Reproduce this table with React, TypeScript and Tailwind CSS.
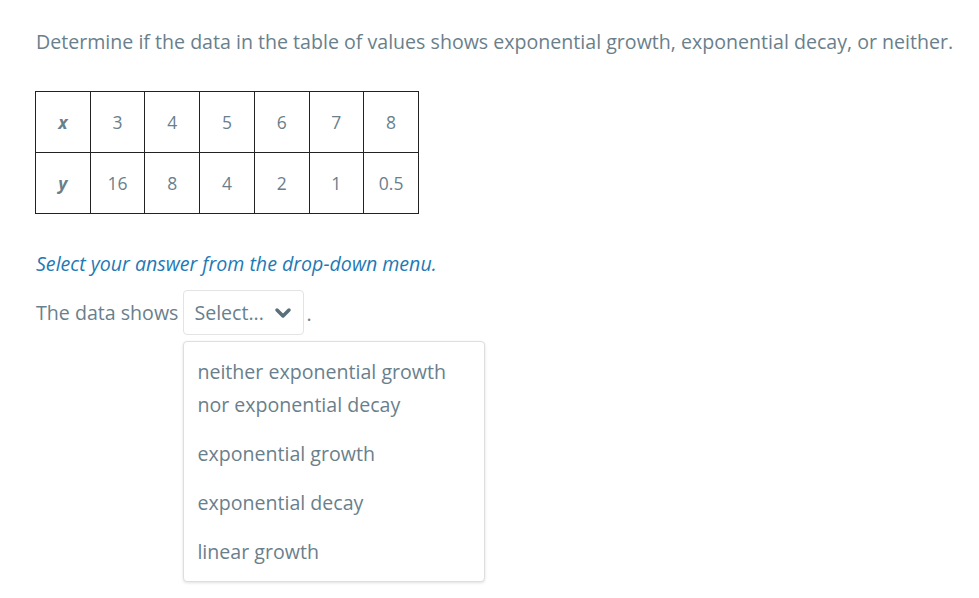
import React from 'react';

const xs = ['3', '4', '5', '6', '7', '8'];
const ys = ['16', '8', '4', '2', '1', '0.5'];
const options = [
  ['neither exponential growth', 'nor exponential decay'],
  ['exponential growth'],
  ['exponential decay'],
  ['linear growth'],
];

export default function App() {
  return (
    <div className="min-h-[598px] bg-white px-[36px] pt-[28px] text-[19.6px] text-[#6a7f8c]" style={{ fontFamily: '"Open Sans", sans-serif' }}>
      <p className="whitespace-nowrap leading-[28px]">
        Determine if the data in the table of values shows exponential growth, exponential decay, or neither.
      </p>

      <table className="mt-[35px] -ml-px w-[384px] table-fixed border-collapse text-[17.5px]">
        <tbody>
          <tr>
            <th className="h-[61px] border border-[#222] font-bold italic">x</th>
            {xs.map((v) => (
              <td key={v} className="h-[61px] border border-[#222] text-center">{v}</td>
            ))}
          </tr>
          <tr>
            <th className="h-[61px] border border-[#222] font-bold italic">y</th>
            {ys.map((v) => (
              <td key={v} className="h-[61px] border border-[#222] text-center">{v}</td>
            ))}
          </tr>
        </tbody>
      </table>

      <p className="mt-[36px] italic leading-[28px] text-[#1e79b5]">Select your answer from the drop-down menu.</p>

      <div className="mt-[12px] flex items-start">
        <span className="mt-[9px] leading-[28px]">The data shows</span>
        <div className="ml-[5px] flex flex-col">
          <div className="flex items-end">
            <div className="flex h-[45px] w-[121px] items-center rounded-[4px] border border-[#e3e3e3] pl-[10px]">
              <span className="leading-[28px]">Select...</span>
              <svg className="ml-[10px]" width="18" height="14" viewBox="0 0 18 14">
                <path d="M3 4 L9 10 L15 4" fill="none" stroke="#5b6f7b" strokeWidth="3.5" strokeLinecap="round" strokeLinejoin="round" />
              </svg>
            </div>
            <span className="mb-[7px] ml-[2px] leading-[28px]">.</span>
          </div>
          <div className="mt-[6px] w-[302px] rounded-[4px] border border-[#dedede] bg-white py-[5px] shadow-[0_1px_3px_rgba(0,0,0,0.12)]">
            {options.map((lines) => (
              <div key={lines[0]} className="px-[13px] py-[8px] leading-[33px]">
                {lines.map((l) => (
                  <div key={l}>{l}</div>
                ))}
              </div>
            ))}
          </div>
        </div>
      </div>
    </div>
  );
}
